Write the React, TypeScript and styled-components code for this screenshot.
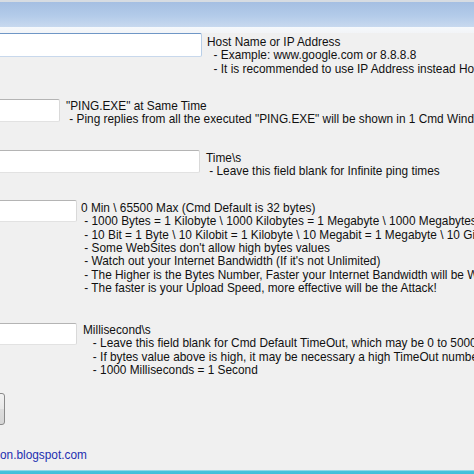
import React from "react";
import styled, { createGlobalStyle } from "styled-components";

const GlobalStyle = createGlobalStyle`
  html, body {
    margin: 0;
    padding: 0;
    background: #f0f0f0;
    overflow: hidden;
  }
  body {
    font-family: "Liberation Sans", Arial, sans-serif;
    font-size: 11.85px;
    color: #101010;
  }
`;

const Window = styled.div`
  width: 474px;
  height: 474px;
  display: flex;
  flex-direction: column;
  overflow: hidden;
  background: #f0f0f0;
`;

const TopEdge = styled.div`
  height: 2px;
  background: #d7dce2;
  flex-shrink: 0;
`;

const TitleBar = styled.div`
  height: 25px;
  flex-shrink: 0;
  background: linear-gradient(to bottom, #a5bfe2 0%, #b3cbe9 55%, #c8d9ef 100%);
`;

const TitleShade = styled.div`
  height: 6px;
  flex-shrink: 0;
  background: linear-gradient(to bottom, #f6f9fc 0%, #f2f4f7 100%);
`;

const Row = styled.div<{ $h: number }>`
  height: ${(p) => p.$h}px;
  flex-shrink: 0;
  display: flex;
  align-items: flex-start;
`;

const Field = styled.input<{ $w: number; $h: number; $focus?: boolean }>`
  box-sizing: border-box;
  flex-shrink: 0;
  width: ${(p) => p.$w}px;
  height: ${(p) => p.$h}px;
  margin: 0 0 0 -4px;
  padding: 0 4px;
  border: 1px solid;
  border-radius: 2px;
  border-color: ${(p) =>
    p.$focus
      ? "#6f97c6 #b8cee7 #c8d8ec #b8cee7"
      : "#b4b4b4 #d9d9d9 #e2e2e2 #d9d9d9"};
  background: #ffffff;
  font: inherit;
  outline: none;
`;

const Notes = styled.div<{ $gap: number; $top: number }>`
  margin-left: ${(p) => p.$gap}px;
  padding-top: ${(p) => p.$top}px;
  white-space: pre;
  line-height: 13.33px;
`;

const Line = styled.div`
  height: 13.33px;
`;

const ButtonRow = styled.div`
  height: 32px;
  flex-shrink: 0;
  display: flex;
`;

const Button = styled.button`
  box-sizing: border-box;
  width: 80px;
  height: 32px;
  margin: 0 0 0 -75px;
  border: 1px solid #8a8a8a;
  border-radius: 3px;
  background: linear-gradient(to bottom, #f2f2f2 0%, #e8e8e8 50%, #dddddd 51%, #d6d6d6 100%);
  font: inherit;
`;

const LinkLine = styled.div`
  margin-top: 24px;
  line-height: 13.33px;
  color: #1d2fb0;
  white-space: pre;
  flex-shrink: 0;
`;

const Spacer = styled.div`
  flex: 1;
`;

const BottomBar = styled.div`
  height: 4px;
  flex-shrink: 0;
  background: linear-gradient(to bottom, #b9e3ed 0%, #45c2dc 35%, #3fbfda 100%);
`;

type Block = {
  h: number;
  fw: number;
  fh: number;
  focus?: boolean;
  gap: number;
  top: number;
  lines: string[];
};

const blocks: Block[] = [
  {
    h: 66,
    fw: 206,
    fh: 24,
    focus: true,
    gap: 5,
    top: 3,
    lines: [
      "Host Name or IP Address",
      "  - Example: www.google.com or 8.8.8.8",
      "  - It is recommended to use IP Address instead Host Name",
    ],
  },
  {
    h: 51,
    fw: 64,
    fh: 23,
    gap: 6,
    top: 1,
    lines: [
      '"PING.EXE" at Same Time',
      ' - Ping replies from all the executed "PING.EXE" will be shown in 1 Cmd Window',
    ],
  },
  {
    h: 50,
    fw: 204,
    fh: 23,
    gap: 6,
    top: 2,
    lines: ["Time\\s", " - Leave this field blank for Infinite ping times"],
  },
  {
    h: 123,
    fw: 81,
    fh: 22,
    gap: 4,
    top: 2,
    lines: [
      "0 Min \\ 65500 Max (Cmd Default is 32 bytes)",
      " - 1000 Bytes = 1 Kilobyte \\ 1000 Kilobytes = 1 Megabyte \\ 1000 Megabytes = 1 Gigabyte",
      " - 10 Bit = 1 Byte \\ 10 Kilobit = 1 Kilobyte \\ 10 Megabit = 1 Megabyte \\ 10 Gigabit = 1 Gigabyte",
      " - Some WebSites don't allow high bytes values",
      " - Watch out your Internet Bandwidth (If it's not Unlimited)",
      " - The Higher is the Bytes Number, Faster your Internet Bandwidth will be Wasted",
      " - The faster is your Upload Speed, more effective will be the Attack!",
    ],
  },
  {
    h: 70,
    fw: 81,
    fh: 22,
    gap: 6,
    top: 1,
    lines: [
      "Millisecond\\s",
      "   - Leave this field blank for Cmd Default TimeOut, which may be 0 to 5000",
      "   - If bytes value above is high, it may be necessary a high TimeOut number",
      "   - 1000 Milliseconds = 1 Second",
    ],
  },
];

export default function App() {
  return (
    <>
      <GlobalStyle />
      <Window>
        <TopEdge />
        <TitleBar />
        <TitleShade />
        {blocks.map((b, i) => (
          <Row key={i} $h={b.h}>
            <Field $w={b.fw} $h={b.fh} $focus={b.focus} readOnly value="" />
            <Notes $gap={b.gap} $top={b.top}>
              {b.lines.map((l, j) => (
                <Line key={j}>{l}</Line>
              ))}
            </Notes>
          </Row>
        ))}
        <ButtonRow>
          <Button type="button">Ping</Button>
        </ButtonRow>
        <LinkLine>on.blogspot.com</LinkLine>
        <Spacer />
        <BottomBar />
      </Window>
    </>
  );
}
